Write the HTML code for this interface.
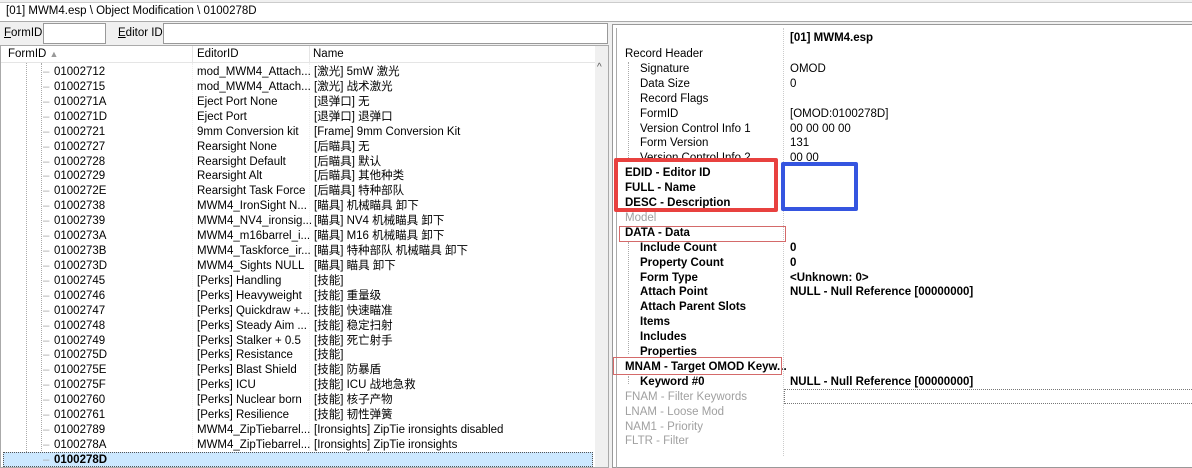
<!DOCTYPE html>
<html><head><meta charset="utf-8"><style>
*{margin:0;padding:0;box-sizing:border-box}
body{width:1192px;height:468px;overflow:hidden;background:#f0f0f0;font-family:"Liberation Sans","Noto Sans CJK SC",sans-serif;font-size:11.5px;color:#000;position:relative}
.a{position:absolute;white-space:nowrap}
.r{position:absolute;left:0;height:15px;line-height:15px;width:100%}
.g{color:#a0a0a0}
b{font-weight:bold}
</style></head><body>
<div class="a" style="left:0;top:2px;width:1192px;height:20px;background:#fff;border-top:1px solid #ccc;border-bottom:1px solid #aaa"></div>
<div class="a" style="left:6px;top:4px;line-height:15px">[01] MWM4.esp \ Object Modification \ 0100278D</div>
<div class="a" style="left:4px;top:27px"><u>F</u>ormID</div>
<div class="a" style="left:43px;top:23px;width:63px;height:21px;background:#fff;border:1px solid #999"></div>
<div class="a" style="left:118px;top:27px"><u>E</u>ditor ID</div>
<div class="a" style="left:163px;top:23px;width:445px;height:21px;background:#fff;border:1px solid #999"></div>
<div class="a" style="left:0;top:45px;width:609px;height:423px;background:#fff;border:1px solid #aaa"></div>
<div class="a" style="left:1px;top:46px;width:594px;height:17px;border-bottom:1px solid #e5e5e5"></div>
<div class="a" style="left:8px;top:48px">FormID <span style="color:#999;font-size:9px">▲</span></div>
<div class="a" style="left:192px;top:46px;width:1px;height:17px;background:#e5e5e5"></div>
<div class="a" style="left:309px;top:46px;width:1px;height:17px;background:#e5e5e5"></div>
<div class="a" style="left:197px;top:48px">EditorID</div>
<div class="a" style="left:313px;top:48px">Name</div>
<div class="a" style="left:595px;top:46px;width:13px;height:421px;background:#f0f0f0"></div>
<div class="a" style="left:597px;top:62px;font-size:10px;color:#555">^</div>
<div class="a" style="left:26px;top:63px;width:0;height:405px;border-left:1px dotted #aaa"></div>
<div class="a" style="left:41px;top:63px;width:0;height:398px;border-left:1px dotted #aaa"></div>
<div class="a" style="left:192px;top:63px;width:0;height:390px;border-left:1px dotted #eee"></div>
<div class="a" style="left:309px;top:63px;width:0;height:390px;border-left:1px dotted #eee"></div>
<div class="a" style="left:3px;top:452px;width:590px;height:15px;background:#cce8ff;border:1px dotted #555"></div>
<div class="a" id="L" style="left:0;top:65px;width:595px;height:403px">
<div class="r" style="top:0"><span class="a" style="left:43px;color:#aaa">–</span><span class="a" style="left:54px">01002712</span><span class="a" style="left:197px">mod_MWM4_Attach...</span><span class="a" style="left:314px">[激光] 5mW 激光</span></div>
<div class="r" style="top:14.92px"><span class="a" style="left:43px;color:#aaa">–</span><span class="a" style="left:54px">01002715</span><span class="a" style="left:197px">mod_MWM4_Attach...</span><span class="a" style="left:314px">[激光] 战术激光</span></div>
<div class="r" style="top:29.84px"><span class="a" style="left:43px;color:#aaa">–</span><span class="a" style="left:54px">0100271A</span><span class="a" style="left:197px">Eject Port None</span><span class="a" style="left:314px">[退弹口] 无</span></div>
<div class="r" style="top:44.76px"><span class="a" style="left:43px;color:#aaa">–</span><span class="a" style="left:54px">0100271D</span><span class="a" style="left:197px">Eject Port</span><span class="a" style="left:314px">[退弹口] 退弹口</span></div>
<div class="r" style="top:59.68px"><span class="a" style="left:43px;color:#aaa">–</span><span class="a" style="left:54px">01002721</span><span class="a" style="left:197px">9mm Conversion kit</span><span class="a" style="left:314px">[Frame] 9mm Conversion Kit</span></div>
<div class="r" style="top:74.6px"><span class="a" style="left:43px;color:#aaa">–</span><span class="a" style="left:54px">01002727</span><span class="a" style="left:197px">Rearsight None</span><span class="a" style="left:314px">[后瞄具] 无</span></div>
<div class="r" style="top:89.52px"><span class="a" style="left:43px;color:#aaa">–</span><span class="a" style="left:54px">01002728</span><span class="a" style="left:197px">Rearsight Default</span><span class="a" style="left:314px">[后瞄具] 默认</span></div>
<div class="r" style="top:104.44px"><span class="a" style="left:43px;color:#aaa">–</span><span class="a" style="left:54px">01002729</span><span class="a" style="left:197px">Rearsight Alt</span><span class="a" style="left:314px">[后瞄具] 其他种类</span></div>
<div class="r" style="top:119.36px"><span class="a" style="left:43px;color:#aaa">–</span><span class="a" style="left:54px">0100272E</span><span class="a" style="left:197px">Rearsight Task Force</span><span class="a" style="left:314px">[后瞄具] 特种部队</span></div>
<div class="r" style="top:134.28px"><span class="a" style="left:43px;color:#aaa">–</span><span class="a" style="left:54px">01002738</span><span class="a" style="left:197px">MWM4_IronSight N...</span><span class="a" style="left:314px">[瞄具] 机械瞄具 卸下</span></div>
<div class="r" style="top:149.2px"><span class="a" style="left:43px;color:#aaa">–</span><span class="a" style="left:54px">01002739</span><span class="a" style="left:197px">MWM4_NV4_ironsig...</span><span class="a" style="left:314px">[瞄具] NV4 机械瞄具 卸下</span></div>
<div class="r" style="top:164.12px"><span class="a" style="left:43px;color:#aaa">–</span><span class="a" style="left:54px">0100273A</span><span class="a" style="left:197px">MWM4_m16barrel_i...</span><span class="a" style="left:314px">[瞄具] M16 机械瞄具 卸下</span></div>
<div class="r" style="top:179.04px"><span class="a" style="left:43px;color:#aaa">–</span><span class="a" style="left:54px">0100273B</span><span class="a" style="left:197px">MWM4_Taskforce_ir...</span><span class="a" style="left:314px">[瞄具] 特种部队 机械瞄具 卸下</span></div>
<div class="r" style="top:193.96px"><span class="a" style="left:43px;color:#aaa">–</span><span class="a" style="left:54px">0100273D</span><span class="a" style="left:197px">MWM4_Sights NULL</span><span class="a" style="left:314px">[瞄具] 瞄具 卸下</span></div>
<div class="r" style="top:208.88px"><span class="a" style="left:43px;color:#aaa">–</span><span class="a" style="left:54px">01002745</span><span class="a" style="left:197px">[Perks] Handling</span><span class="a" style="left:314px">[技能]</span></div>
<div class="r" style="top:223.8px"><span class="a" style="left:43px;color:#aaa">–</span><span class="a" style="left:54px">01002746</span><span class="a" style="left:197px">[Perks] Heavyweight</span><span class="a" style="left:314px">[技能] 重量级</span></div>
<div class="r" style="top:238.72px"><span class="a" style="left:43px;color:#aaa">–</span><span class="a" style="left:54px">01002747</span><span class="a" style="left:197px">[Perks] Quickdraw +...</span><span class="a" style="left:314px">[技能] 快速瞄准</span></div>
<div class="r" style="top:253.64px"><span class="a" style="left:43px;color:#aaa">–</span><span class="a" style="left:54px">01002748</span><span class="a" style="left:197px">[Perks] Steady Aim ...</span><span class="a" style="left:314px">[技能] 稳定扫射</span></div>
<div class="r" style="top:268.56px"><span class="a" style="left:43px;color:#aaa">–</span><span class="a" style="left:54px">01002749</span><span class="a" style="left:197px">[Perks] Stalker + 0.5</span><span class="a" style="left:314px">[技能] 死亡射手</span></div>
<div class="r" style="top:283.48px"><span class="a" style="left:43px;color:#aaa">–</span><span class="a" style="left:54px">0100275D</span><span class="a" style="left:197px">[Perks] Resistance</span><span class="a" style="left:314px">[技能]</span></div>
<div class="r" style="top:298.4px"><span class="a" style="left:43px;color:#aaa">–</span><span class="a" style="left:54px">0100275E</span><span class="a" style="left:197px">[Perks] Blast Shield</span><span class="a" style="left:314px">[技能] 防暴盾</span></div>
<div class="r" style="top:313.32px"><span class="a" style="left:43px;color:#aaa">–</span><span class="a" style="left:54px">0100275F</span><span class="a" style="left:197px">[Perks] ICU</span><span class="a" style="left:314px">[技能] ICU 战地急救</span></div>
<div class="r" style="top:328.24px"><span class="a" style="left:43px;color:#aaa">–</span><span class="a" style="left:54px">01002760</span><span class="a" style="left:197px">[Perks] Nuclear born</span><span class="a" style="left:314px">[技能] 核子产物</span></div>
<div class="r" style="top:343.16px"><span class="a" style="left:43px;color:#aaa">–</span><span class="a" style="left:54px">01002761</span><span class="a" style="left:197px">[Perks] Resilience</span><span class="a" style="left:314px">[技能] 韧性弹簧</span></div>
<div class="r" style="top:358.08px"><span class="a" style="left:43px;color:#aaa">–</span><span class="a" style="left:54px">01002789</span><span class="a" style="left:197px">MWM4_ZipTiebarrel...</span><span class="a" style="left:314px">[Ironsights] ZipTie ironsights disabled</span></div>
<div class="r" style="top:373px"><span class="a" style="left:43px;color:#aaa">–</span><span class="a" style="left:54px">0100278A</span><span class="a" style="left:197px">MWM4_ZipTiebarrel...</span><span class="a" style="left:314px">[Ironsights] ZipTie ironsights</span></div>
<div class="r" style="top:387.92px"><span class="a" style="left:43px;color:#aaa">–</span><span class="a" style="left:54px"><b>0100278D</b></span></div>
</div>
<div class="a" style="left:612px;top:24px;width:580px;height:444px;background:#fff;border:1px solid #999;border-right:none"></div>
<div class="a" style="left:616px;top:28px;width:1px;height:440px;background:#aaa"></div>
<div class="a" style="left:783px;top:28px;width:0;height:428px;border-left:1px dotted #ccc"></div>
<div class="a" style="left:790px;top:32px"><b>[01] MWM4.esp</b></div>
<div class="a" style="left:628px;top:62px;width:0;height:100px;border-left:1px dotted #aaa"></div>
<div class="a" style="left:628px;top:242px;width:0;height:112px;border-left:1px dotted #aaa"></div>
<div class="a" style="left:628px;top:376px;width:0;height:8px;border-left:1px dotted #aaa"></div>
<div class="a" style="left:617px;top:47px;width:575px;height:410px">
<div class="r" style="top:0"><span class="a" style="left:8px">Record Header</span></div>
<div class="r" style="top:14.9px"><span class="a" style="left:23px">Signature</span><span class="a" style="left:173px">OMOD</span></div>
<div class="r" style="top:29.8px"><span class="a" style="left:23px">Data Size</span><span class="a" style="left:173px">0</span></div>
<div class="r" style="top:44.7px"><span class="a" style="left:23px">Record Flags</span></div>
<div class="r" style="top:59.6px"><span class="a" style="left:23px">FormID</span><span class="a" style="left:173px">[OMOD:0100278D]</span></div>
<div class="r" style="top:74.5px"><span class="a" style="left:23px">Version Control Info 1</span><span class="a" style="left:173px">00 00 00 00</span></div>
<div class="r" style="top:89.4px"><span class="a" style="left:23px">Form Version</span><span class="a" style="left:173px">131</span></div>
<div class="r" style="top:104.3px"><span class="a" style="left:23px">Version Control Info 2</span><span class="a" style="left:173px">00 00</span></div>
<div class="r" style="top:119.2px;background:#fff"><b class="a" style="left:8px">EDID - Editor ID</b></div>
<div class="r" style="top:134.1px"><b class="a" style="left:8px">FULL - Name</b></div>
<div class="r" style="top:149px"><b class="a" style="left:8px">DESC - Description</b></div>
<div class="r g" style="top:163.9px"><span class="a" style="left:8px">Model</span></div>
<div class="r" style="top:178.8px"><b class="a" style="left:8px">DATA - Data</b></div>
<div class="r" style="top:193.7px"><b class="a" style="left:23px">Include Count</b><b class="a" style="left:173px">0</b></div>
<div class="r" style="top:208.6px"><b class="a" style="left:23px">Property Count</b><b class="a" style="left:173px">0</b></div>
<div class="r" style="top:223.5px"><b class="a" style="left:23px">Form Type</b><b class="a" style="left:173px">&lt;Unknown: 0&gt;</b></div>
<div class="r" style="top:238.4px"><b class="a" style="left:23px">Attach Point</b><b class="a" style="left:173px">NULL - Null Reference [00000000]</b></div>
<div class="r" style="top:253.3px"><b class="a" style="left:23px">Attach Parent Slots</b></div>
<div class="r" style="top:268.2px"><b class="a" style="left:23px">Items</b></div>
<div class="r" style="top:283.1px"><b class="a" style="left:23px">Includes</b></div>
<div class="r" style="top:298px"><b class="a" style="left:23px">Properties</b></div>
<div class="r" style="top:312.9px"><b class="a" style="left:8px">MNAM - Target OMOD Keyw...</b></div>
<div class="r" style="top:327.8px"><b class="a" style="left:23px">Keyword #0</b><b class="a" style="left:173px">NULL - Null Reference [00000000]</b></div>
<div class="r g" style="top:342.7px"><span class="a" style="left:8px">FNAM - Filter Keywords</span></div>
<div class="r g" style="top:357.6px"><span class="a" style="left:8px">LNAM - Loose Mod</span></div>
<div class="r g" style="top:372.5px"><span class="a" style="left:8px">NAM1 - Priority</span></div>
<div class="r g" style="top:387.4px"><span class="a" style="left:8px">FLTR - Filter</span></div>
</div>
<div class="a" style="left:784px;top:389px;width:408px;height:15px;border:1px dotted #777;border-right:none"></div>
<div class="a" style="left:614px;top:158px;width:164px;height:54px;border:4px solid #e8413f;border-radius:2px"></div>
<div class="a" style="left:781px;top:162px;width:77px;height:49px;border:4px solid #3555e0;border-radius:2px"></div>
<div class="a" style="left:619px;top:226px;width:167px;height:16px;border:1px solid #d46a6a"></div>
<div class="a" style="left:613px;top:357px;width:169px;height:18px;border:1px solid #d46a6a"></div>
</body></html>
